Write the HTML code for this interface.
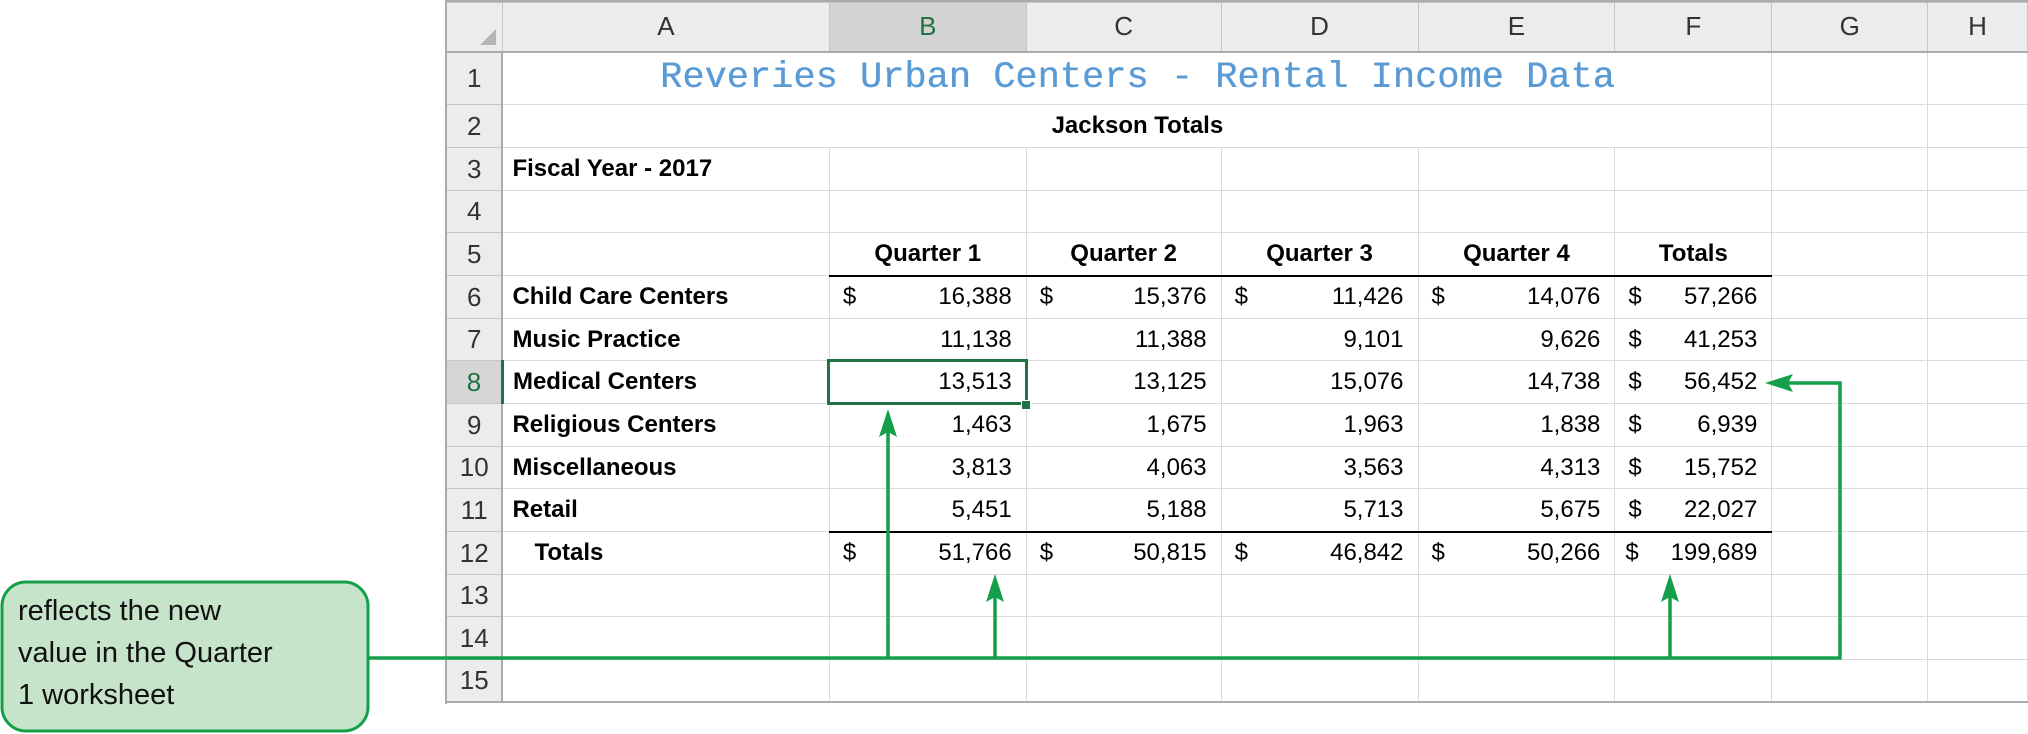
<!DOCTYPE html>
<html><head><meta charset="utf-8"><style>
html,body{margin:0;padding:0;background:#fff;width:2028px;height:734px;overflow:hidden;position:relative}
table{position:absolute;left:446px;top:2px;border-collapse:collapse;table-layout:fixed;font-family:"Liberation Sans Narrow","Liberation Sans",sans-serif;font-size:24px;color:#000}
td{border:1px solid #dadada;padding:0;white-space:nowrap;overflow:hidden}
td.h{background:#ececec;border-color:#c6c6c6;color:#333;text-align:center;font-weight:normal;font-size:26px}
tr.ch td{border-bottom:2px solid #ababab}
td.rh{border-right:2px solid #ababab}
td.sel{background:#d3d3d3;color:#217346;border-bottom:3px solid #217346}
td.selr{background:#d6d6d6;color:#217346;border-right:3px solid #217346}
.b{font-weight:bold}
.l{padding-left:9px}
.n{display:flex;justify-content:space-between;padding:0 14px 0 13px}
.r{text-align:right;padding-right:14px}
.c{text-align:center}
.ub{border-bottom:2px solid #000}
</style></head><body>
<table>
<colgroup><col style="width:56px"><col style="width:327px"><col style="width:197px"><col style="width:195px"><col style="width:197px"><col style="width:197px"><col style="width:157px"><col style="width:156px"><col style="width:100px"></colgroup>
<tr class="ch" style="height:49px"><td class="h" style="position:relative"><svg width="20" height="20" style="position:absolute;right:4px;bottom:4px"><polygon points="18,2 18,18 2,18" fill="#b5b5b5"/></svg></td><td class="h">A</td><td class="h sel">B</td><td class="h">C</td><td class="h">D</td><td class="h">E</td><td class="h">F</td><td class="h">G</td><td class="h">H</td></tr>
<tr style="height:53px"><td class="h rh">1</td><td colspan="6" class="c" style="font-family:'Liberation Mono',monospace;font-size:37px;color:#5b9bd5;text-shadow:0.4px 0 0 #5b9bd5">Reveries Urban Centers - Rental Income Data</td><td></td><td></td></tr>
<tr style="height:43px"><td class="h rh">2</td><td colspan="6" class="c b">Jackson Totals</td><td></td><td></td></tr>
<tr style="height:43px"><td class="h rh">3</td><td class="b l">Fiscal Year - 2017</td><td></td><td></td><td></td><td></td><td></td><td></td><td></td></tr>
<tr style="height:42px"><td class="h rh">4</td><td></td><td></td><td></td><td></td><td></td><td></td><td></td><td></td></tr>
<tr style="height:43px"><td class="h rh">5</td><td></td><td class="b c ub">Quarter 1</td><td class="b c ub">Quarter 2</td><td class="b c ub">Quarter 3</td><td class="b c ub">Quarter 4</td><td class="b c ub">Totals</td><td></td><td></td></tr>
<tr style="height:43px"><td class="h rh">6</td><td class="b l">Child Care Centers</td><td><div class="n"><span>$</span><span>16,388</span></div></td><td><div class="n"><span>$</span><span>15,376</span></div></td><td><div class="n"><span>$</span><span>11,426</span></div></td><td><div class="n"><span>$</span><span>14,076</span></div></td><td><div class="n"><span>$</span><span>57,266</span></div></td><td></td><td></td></tr>
<tr style="height:42px"><td class="h rh">7</td><td class="b l">Music Practice</td><td class="r">11,138</td><td class="r">11,388</td><td class="r">9,101</td><td class="r">9,626</td><td><div class="n"><span>$</span><span>41,253</span></div></td><td></td><td></td></tr>
<tr style="height:43px"><td class="h selr">8</td><td class="b l">Medical Centers</td><td class="r">13,513</td><td class="r">13,125</td><td class="r">15,076</td><td class="r">14,738</td><td><div class="n"><span>$</span><span>56,452</span></div></td><td></td><td></td></tr>
<tr style="height:43px"><td class="h rh">9</td><td class="b l">Religious Centers</td><td class="r">1,463</td><td class="r">1,675</td><td class="r">1,963</td><td class="r">1,838</td><td><div class="n"><span>$</span><span>6,939</span></div></td><td></td><td></td></tr>
<tr style="height:42px"><td class="h rh">10</td><td class="b l">Miscellaneous</td><td class="r">3,813</td><td class="r">4,063</td><td class="r">3,563</td><td class="r">4,313</td><td><div class="n"><span>$</span><span>15,752</span></div></td><td></td><td></td></tr>
<tr style="height:43px"><td class="h rh">11</td><td class="b l">Retail</td><td class="r ub">5,451</td><td class="r ub">5,188</td><td class="r ub">5,713</td><td class="r ub">5,675</td><td class="ub"><div class="n"><span>$</span><span>22,027</span></div></td><td></td><td></td></tr>
<tr style="height:43px"><td class="h rh">12</td><td class="b" style="padding-left:31px">Totals</td><td><div class="n"><span>$</span><span>51,766</span></div></td><td><div class="n"><span>$</span><span>50,815</span></div></td><td><div class="n"><span>$</span><span>46,842</span></div></td><td><div class="n"><span>$</span><span>50,266</span></div></td><td><div class="n" style="padding-left:10px"><span>$</span><span>199,689</span></div></td><td></td><td></td></tr>
<tr style="height:42px"><td class="h rh">13</td><td></td><td></td><td></td><td></td><td></td><td></td><td></td><td></td></tr>
<tr style="height:43px"><td class="h rh">14</td><td></td><td></td><td></td><td></td><td></td><td></td><td></td><td></td></tr>
<tr style="height:42px"><td class="h rh" style="border-bottom:2px solid #ababab">15</td><td style="border-bottom:2px solid #ababab"></td><td style="border-bottom:2px solid #ababab"></td><td style="border-bottom:2px solid #ababab"></td><td style="border-bottom:2px solid #ababab"></td><td style="border-bottom:2px solid #ababab"></td><td style="border-bottom:2px solid #ababab"></td><td style="border-bottom:2px solid #ababab"></td><td style="border-bottom:2px solid #ababab"></td></tr>
</table>
<div style="position:absolute;left:446px;top:0;width:1582px;height:2px;background:#ababab"></div>
<div style="position:absolute;left:445px;top:0;width:2px;height:704px;background:#ababab"></div>
<div style="position:absolute;left:827px;top:359px;width:195px;height:40px;border:3px solid #217346"></div>
<div style="position:absolute;left:1021px;top:400px;width:8px;height:8px;background:#217346;border:1px solid #fff"></div>
<svg width="2028" height="734" style="position:absolute;left:0;top:0">
<g stroke="#14a04b" stroke-width="3.5" fill="none">
<polyline points="369,658 1840,658 1840,383 1785,383"/>
<line x1="888" y1="658" x2="888" y2="430"/>
<line x1="995" y1="658" x2="995" y2="595"/>
<line x1="1670" y1="658" x2="1670" y2="595"/>
</g>
<g fill="#14a04b">
<polygon points="888,409 879,437 888,432 897,437"/>
<polygon points="995,574 986,602 995,597 1004,602"/>
<polygon points="1670,574 1661,602 1670,597 1679,602"/>
<polygon points="1765,383 1793,374 1788,383 1793,392"/>
</g>
<rect x="2" y="582" width="366" height="149" rx="24" ry="24" fill="#c6e4c9" stroke="#14a04b" stroke-width="3"/>
<text font-family="Liberation Sans Narrow, Liberation Sans, sans-serif" font-size="29" fill="#111">
<tspan x="18" y="620">reflects the new</tspan>
<tspan x="18" y="662">value in the Quarter</tspan>
<tspan x="18" y="704">1 worksheet</tspan>
</text>
</svg>
</body></html>
